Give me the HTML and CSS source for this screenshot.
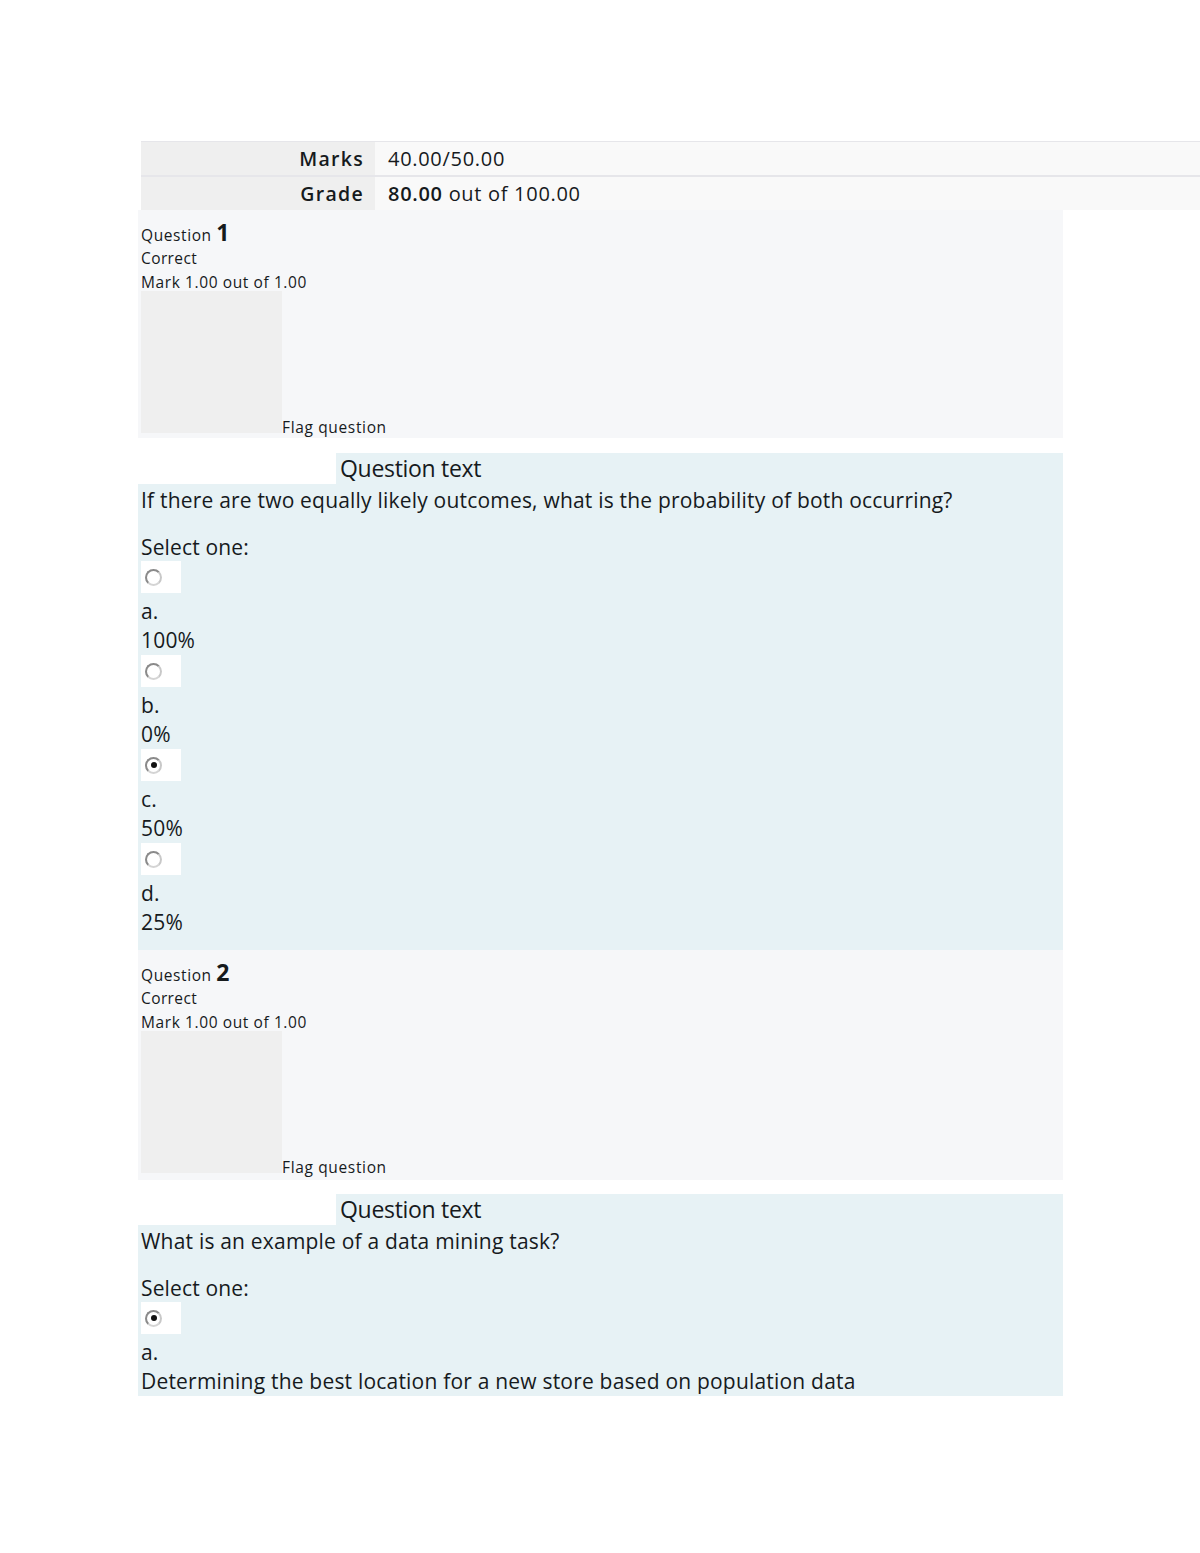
FILE: index.html
```html
<!DOCTYPE html>
<html>
<head>
<meta charset="utf-8">
<link rel="stylesheet" href="styles.css">
</head>
<body>
<div class="page">
  <table class="summary">
    <tr><th>Marks</th><td>40.00/50.00</td></tr>
    <tr><th>Grade</th><td><b>80.00</b> out of 100.00</td></tr>
  </table>

  <div class="que">
    <div class="info">
      <div class="qno">Question <span class="num">1</span></div>
      <div class="state">Correct</div>
      <div class="grade">Mark 1.00 out of 1.00</div>
      <div class="flagrow"><div class="flagbox"></div><span class="flag">Flag question</span></div>
    </div>
    <div class="content">
      <div class="qtitle">Question text</div>
      <div class="body">
        <div class="qtext">If there are two equally likely outcomes, what is the probability of both occurring?</div>
        <div class="prompt">Select one:</div>
        <div class="opt"><span class="radio"><span class="circ"></span></span><div class="lbl">a.</div><div class="ans">100%</div></div>
        <div class="opt"><span class="radio"><span class="circ"></span></span><div class="lbl">b.</div><div class="ans">0%</div></div>
        <div class="opt"><span class="radio"><span class="circ on"></span></span><div class="lbl">c.</div><div class="ans">50%</div></div>
        <div class="opt"><span class="radio"><span class="circ"></span></span><div class="lbl">d.</div><div class="ans">25%</div></div>
      </div>
    </div>
  </div>

  <div class="que second">
    <div class="info">
      <div class="qno">Question <span class="num">2</span></div>
      <div class="state">Correct</div>
      <div class="grade">Mark 1.00 out of 1.00</div>
      <div class="flagrow"><div class="flagbox"></div><span class="flag">Flag question</span></div>
    </div>
    <div class="content">
      <div class="qtitle">Question text</div>
      <div class="body">
        <div class="qtext">What is an example of a data mining task?</div>
        <div class="prompt">Select one:</div>
        <div class="opt"><span class="radio"><span class="circ on"></span></span><div class="lbl">a.</div><div class="ans">Determining the best location for a new store based on population data</div></div>
      </div>
    </div>
  </div>
</div>
</body>
</html>
```

FILE: styles.css
```css
html, body {
  margin: 0;
  padding: 0;
  background: #ffffff;
}
body {
  font-family: "Open Sans", "Noto Sans", sans-serif;
  color: #161a1d;
}
.page {
  padding-top: 141px;
  padding-left: 138px;
}
.summary {
  margin-left: 3px;
  width: 1059px;
  border-collapse: collapse;
  border-top: 1px solid #e6e6ea;
}
.summary tr + tr {
  border-top: 2px solid #e6e6ea;
}
.summary th {
  width: 234px;
  box-sizing: border-box;
  background: #efefef;
  text-align: right;
  font-weight: 600;
  font-size: 19.5px;
  padding: 0 11px 0 0;
  height: 33px;
  letter-spacing: 1.3px;
}
.summary td {
  background: #f9f9f9;
  font-size: 20px;
  padding: 0 0 0 13px;
  height: 33px;
  letter-spacing: 0.7px;
}
.summary td b { font-weight: 600; }

.que {
  width: 925px;
}
.info {
  background: #f6f7f9;
  height: 228px;
  padding-left: 3px;
  box-sizing: border-box;
  padding-top: 8px;
}
.second .info { height: 230px; }
.qno {
  font-size: 15.5px;
  letter-spacing: 0.6px;
  height: 28px;
  line-height: 28px;
}
.qno .num {
  font-size: 23px;
  font-weight: 700;
}
.state, .grade {
  font-size: 15.5px;
  line-height: 24px;
  height: 24px;
}
.state { letter-spacing: 0.4px; }
.grade { letter-spacing: 0.6px; }
.flagrow {
  display: flex;
  align-items: flex-start;
  margin-top: -3px;
}
.flagbox {
  width: 141px;
  height: 142px;
  margin-bottom: 3px;
  background: #efefef;
}
.flag {
  align-self: flex-end;
  font-size: 15.5px;
  letter-spacing: 0.65px;
  line-height: 18px;
}

.content {
  margin-top: 15px;
}
.second .content { margin-top: 14px; }
.qtitle {
  margin-left: 198px;
  background: #e7f2f5;
  font-size: 23px;
  line-height: 31px;
  height: 31px;
  padding-left: 4px;
  letter-spacing: -0.3px;
}
.body {
  background: #e7f2f5;
  padding-left: 3px;
  padding-bottom: 13px;
}
.qtext {
  font-size: 21px;
  line-height: 32px;
  letter-spacing: 0.2px;
}
.prompt {
  font-size: 21px;
  line-height: 28px;
  margin-top: 17px;
  letter-spacing: 0.15px;
}
.radio {
  display: flex;
  align-items: center;
  width: 40px;
  height: 32px;
  background: #ffffff;
  box-sizing: border-box;
  padding-left: 4px;
}
.circ {
  width: 13px;
  height: 13px;
  border-radius: 50%;
  border: 2px solid #8a8a8a;
  border-right-color: #c8c8c8;
  border-bottom-color: #d4d4d4;
  background: #ffffff;
  position: relative;
}
.circ.on::after {
  content: "";
  position: absolute;
  left: 3.5px;
  top: 3.5px;
  width: 6px;
  height: 6px;
  border-radius: 50%;
  background: #111;
}
.lbl, .ans {
  font-size: 21px;
  letter-spacing: 0.2px;
}
.lbl {
  margin-top: 3px;
  line-height: 30px;
}
.ans { line-height: 29px; }

.second .content .body { padding-bottom: 0; }
```
